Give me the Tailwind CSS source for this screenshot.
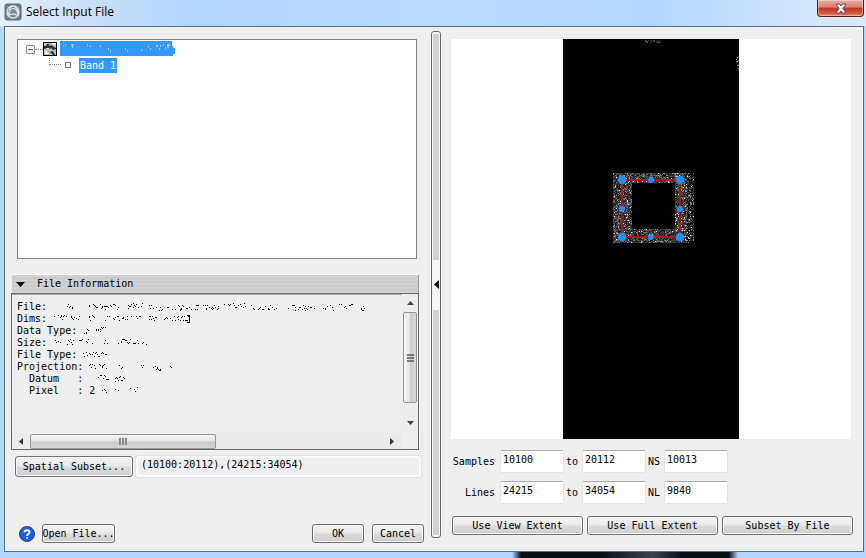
<!DOCTYPE html>
<html lang="en">
<head>
<meta charset="utf-8">
<title>Select Input File</title>
<script src="https://cdn.jsdelivr.net/npm/@tailwindcss/browser@4"></script>
</head>
<body class="relative flex h-screen flex-col overflow-hidden bg-[#b4d8fd] pr-0.5 pb-1.5 pl-1 font-['DejaVu_Sans_Mono','Liberation_Mono',monospace] text-[10px] leading-3 text-black">
  <div class="absolute inset-x-0 top-0 -z-10 h-[26px] bg-[linear-gradient(90deg,#e6f0fb_0%,#c9dff8_10%,#b3d6fb_22%,#b9dafc_50%,#b4d8fd_76%,#cde2fa_90%,#dceafb_100%)]"></div>
  <div class="absolute top-[552px] right-[128px] bottom-0 left-[512px] -z-10 bg-[linear-gradient(90deg,#b4d8fd00,#0a0f16_4%,#0a0f16_40%,#3c4450_62%,#0a0f16_75%,#0a0f16_96%,#b4d8fd00)]"></div>

  <header class="flex h-[26px] shrink-0 items-start justify-between">
    <div class="flex h-6 items-center gap-1">
      <svg class="size-[18px]" viewBox="0 0 18 18" aria-hidden="true">
        <rect x="1" y="1" width="16" height="16" rx="2" fill="#76828c" stroke="#59646d"/>
        <circle cx="9" cy="9" r="6" fill="#7f8a92" stroke="#dfe4e7" stroke-width="1.300"/>
        <path d="M4 12.500Q5 6 9 5.500T14 12.500M4 12Q9 10 14 12.500M8 3Q4 6 5.500 14M10 3q4 3 4.500 8" fill="none" stroke="#e1e6e8" stroke-width="1.100"/>
      </svg>
      <h1 class="font-['Open_Sans','Noto_Sans',sans-serif] text-[12px] leading-4">Select Input File</h1>
    </div>
    <button aria-label="Close" class="flex h-[17px] w-[47px] items-center justify-center rounded-b-[4px] border border-t-0 border-[#5a1d1b] bg-[linear-gradient(#e9aba0,#dc8073_45%,#bd3321_50%,#d5573c_80%,#e48a70)] shadow-[inset_0_0_0_1px_#ffffff60]">
      <svg class="h-[11px] w-[12px]" viewBox="0 0 12 11" aria-hidden="true"><path d="M1 1h3.500L6 3l1.500-2H11L8 5.500l3 4.500H7.500L6 8l-1.500 2H1l3-4.500z" fill="#f2f2f2" stroke="#56525c"/></svg>
    </button>
  </header>

  <main class="grid min-h-0 flex-1 grid-cols-[426fr_10px_422fr] border border-[#5c6b7c] bg-[#efefef]">
    <section class="flex min-h-0 min-w-0 flex-col pt-3 pb-2">
      <div class="mr-3.5 ml-3 flex min-h-0 flex-1 flex-col border border-[#7f848e] bg-white" role="tree">
        <div class="flex h-[18px] items-center pl-2" role="treeitem">
          <button aria-label="Collapse" class="flex size-[9px] items-center justify-center rounded-[1px] border border-[#919191] bg-[#f2f2f2]"><span class="h-px w-[5px] bg-[#3a5a9c]"></span></button>
          <span class="w-2 border-t border-dotted border-[#808080]"></span>
          <svg class="size-3.5" viewBox="0 0 14 14" aria-hidden="true"><rect width="14" height="14"/><rect x="1" y="1" width="12" height="12" fill="#b9beb9"/><path d="M1 4h2l1-2h2v2l2-1 3 2 2 1v1l-3 1-2-2-2 1-2-1-3 1zM5 9l2 1 3-1 2 4h-2l-2-2z" fill="#333"/><path d="M8 1l3 2 2-1v-1zM2 9h2l2 3H2zM4 6h2v1H4z" fill="#fff"/></svg>
          <svg class="ml-[3px] h-[18px] w-[116px]" viewBox="0 0 116 18" aria-hidden="true"><path d="M0 1h112v5h1v2h2v6h-2v2H0z" fill="#3399ff"/><path d="M3 6h1M5 5h1M11 5h3M12 7h1M27 5h1M30 6h1M40 6h1M48 9h1M50 11h1M65 9h1M67 11h1M81 10h1M88 7h1M90 9h1M96 6h2M99 9h1M100 6h1M103 5h1M105 8h1M107 5h3M107 7h2" stroke="#fff"/></svg>
        </div>
        <div class="flex h-4 items-start pl-[31px]" role="treeitem">
          <span class="h-[7px] w-3 border-b border-l border-dotted border-[#808080]"></span>
          <span class="mt-1 mr-2 ml-1 size-[6px] border border-[#777]"></span>
          <span class="h-[15px] bg-[#3399ff] px-px leading-[15px] text-white">Band 1</span>
        </div>
      </div>

      <button class="mt-[15px] mr-3 ml-[7px] flex h-[19px] items-center gap-3 border-t border-r border-t-white border-r-[#999] bg-[repeating-linear-gradient(#d2d2d2_0_2px,#cacaca_2px_4px)] pl-1 text-left">
        <svg class="h-[5px] w-[9px]" viewBox="0 0 9 5" aria-hidden="true"><path d="M0 0h9L4.500 5z"/></svg>File Information
      </button>
      <div class="mr-3 ml-1.5 flex h-[157px] shrink-0 flex-col border border-[#696969]">
        <div class="flex min-h-0 flex-1">
          <div class="flex min-w-0 flex-1 flex-col overflow-hidden border-t border-[#a8a4b0] pt-1.5 pl-[5px] whitespace-pre">
            <div class="flex">File: <svg class="h-3 w-[318px]" data-marks="14 6,33 4,40 28,74 16,96 24,122 24,150 16,170 24,198 26,234 28,270 12,286 14,306 8" aria-hidden="true"></svg></div>
            <div class="flex">Dims: <svg class="h-3 w-[145px]" data-marks="0 27,36 8,52 36,96 8,110 26" aria-hidden="true"><path d="M134 2h3v8h-3v-1h2V3h-2z"/></svg></div>
            <div class="flex">Data Type: <svg class="h-3 w-[40px]" data-marks="0 6,13 10" aria-hidden="true"></svg></div>
            <div class="flex">Size: <svg class="h-3 w-[110px]" data-marks="0 8,14 26,50 6,64 22,86 8" aria-hidden="true"></svg></div>
            <div class="flex">File Type: <svg class="h-3 w-[40px]" data-marks="0 24" aria-hidden="true"></svg></div>
            <div class="flex">Projection: <svg class="h-3 w-[110px]" data-marks="0 18,30 4,52 4,64 9,80 6" aria-hidden="true"></svg></div>
            <div class="flex">  Datum   : <svg class="h-3 w-[60px]" data-marks="0 4,8 12,23 14" aria-hidden="true"></svg></div>
            <div class="flex">  Pixel   : 2 <svg class="h-3 w-[60px]" data-marks="0 6,13 5,26 4,32 6" aria-hidden="true"></svg></div>
          </div>
          <div class="flex w-4 flex-col items-center bg-[#ededed]">
            <svg class="my-[7px] h-1 w-[7px] shrink-0" viewBox="0 0 7 4" aria-hidden="true"><path d="M0 4l3.500-4L7 4z" fill="#444"/></svg>
            <div class="flex h-[91px] w-3.5 flex-col items-center justify-center gap-px rounded-[2px] border border-[#969696] bg-[linear-gradient(90deg,#f6f6f6,#e6e6e8_45%,#cbcbd0_55%,#d9d9dd)]"><span class="h-0.5 w-[7px] bg-[#777]"></span><span class="h-0.5 w-[7px] bg-[#777]"></span><span class="h-0.5 w-[7px] bg-[#777]"></span></div>
            <svg class="mt-auto mb-2 h-1 w-[7px]" viewBox="0 0 7 4" aria-hidden="true"><path d="M0 0h7L3.500 4z" fill="#444"/></svg>
          </div>
        </div>
        <div class="mr-4 flex h-4 items-center bg-[#ebebeb]">
          <svg class="mx-[7px] h-[7px] w-1 shrink-0" viewBox="0 0 4 7" aria-hidden="true"><path d="M4 0v7L0 3.500z" fill="#333"/></svg>
          <div class="flex h-[15px] w-[186px] items-center justify-center gap-px rounded-[2px] border border-[#969696] bg-[linear-gradient(#f6f6f6,#e3e3e3_45%,#cbcbcb_55%,#d6d6d6)]"><span class="h-[7px] w-0.5 bg-[#888]"></span><span class="h-[7px] w-0.5 bg-[#888]"></span><span class="h-[7px] w-0.5 bg-[#888]"></span></div>
          <svg class="mr-2 ml-auto h-[7px] w-1" viewBox="0 0 4 7" aria-hidden="true"><path d="M0 0v7l4-3.500z" fill="#333"/></svg>
        </div>
      </div>

      <div class="mt-1.5 mr-2.5 ml-2.5 flex h-[21px] shrink-0 gap-[3px]">
        <button class="w-[118px] shrink-0 rounded-[3px] border border-[#707070] bg-[linear-gradient(#f4f4f4,#e9e9e9_48%,#dadada_52%,#cfcfcf)] shadow-[inset_0_0_0_1px_#fafafa]">Spatial Subset...</button>
        <input aria-label="Spatial subset" readonly value="(10100:20112),(24215:34054)" class="min-w-0 flex-1 rounded-[2px] border-2 border-[#fafafa] bg-[#efefef] px-[3px] pb-1 outline outline-[#e0e2e8]">
      </div>

      <div class="mt-[47px] mr-[7px] ml-3.5 flex h-[19px] shrink-0 items-center">
        <button aria-label="Help" class="size-4"><svg viewBox="0 0 16 16" aria-hidden="true"><circle cx="8" cy="8" r="7.500" fill="#1460f4" stroke="#333d55"/><path d="M5.500 6.300C5.500 3.500 10.500 3.500 10.500 6.300 10.500 8 8 8 8 10M8 11.200v1.600" fill="none" stroke="#fff" stroke-width="1.900"/></svg></button>
        <button class="ml-[7px] flex h-full w-[73px] items-center justify-center rounded-[3px] border border-[#707070] bg-[linear-gradient(#f4f4f4,#e9e9e9_48%,#dadada_52%,#cfcfcf)] whitespace-nowrap shadow-[inset_0_0_0_1px_#fafafa]">Open File...</button>
        <button class="ml-auto h-full w-[52px] rounded-[3px] border border-[#707070] bg-[linear-gradient(#f4f4f4,#e9e9e9_48%,#dadada_52%,#cfcfcf)] shadow-[inset_0_0_0_1px_#fafafa]">OK</button>
        <button class="ml-2 h-full w-[52px] rounded-[3px] border border-[#707070] bg-[linear-gradient(#f4f4f4,#e9e9e9_48%,#dadada_52%,#cfcfcf)] shadow-[inset_0_0_0_1px_#fafafa]">Cancel</button>
      </div>
    </section>

    <div class="mt-1 mb-[13px] flex flex-col rounded-[3px] border border-[#696969] bg-[#f8f8f8] px-px py-0.5" role="separator">
      <div class="flex-[226] bg-[#d2d2d2]"></div>
      <button aria-label="Collapse panel" class="flex h-[50px] items-center justify-end"><svg class="h-[9px] w-[5px]" viewBox="0 0 5 9" aria-hidden="true"><path d="M5 0v9L0 4.500z"/></svg></button>
      <div class="flex-[226] bg-[#d2d2d2]"></div>
    </div>

    <section class="flex min-h-0 min-w-0 flex-col pt-3 pb-4">
      <div class="mr-3 ml-2.5 flex min-h-0 flex-1 justify-center bg-white">
        <svg class="h-full w-[176px] bg-black" viewBox="0 0 176 400" role="img" aria-label="Band preview">
          <g id="speckle"></g>
          <path d="M59 141h58v57H59z" fill="none" stroke="#b01216" stroke-width="2"/>
          <path d="M88 134v7" stroke="#1e90ff"/>
          <g fill="#1e90ff">
            <circle cx="59" cy="141" r="4.200"/><circle cx="117" cy="141" r="4.200"/><circle cx="59" cy="198" r="4.200"/><circle cx="117" cy="198" r="4.200"/>
            <circle cx="88" cy="141" r="3"/><circle cx="59" cy="170" r="3"/><circle cx="117" cy="170" r="3"/><circle cx="88" cy="198" r="3"/>
          </g>
        </svg>
      </div>
      <form class="mt-[11px] ml-2.5 grid grid-cols-[44px_64px_18px_64px_18px_64px] gap-y-2 [&>label]:self-center">
        <label for="s1" class="text-right">Samples</label>
        <input id="s1" value="10100" class="ml-[5px] h-[23px] w-16 rounded-[2px] border border-[#e2e3ea] border-t-[#abadb3] bg-white px-0.5 pb-[5px]">
        <label for="s2" class="pl-[7px]">to</label>
        <input id="s2" value="20112" class="ml-[5px] h-[23px] w-16 rounded-[2px] border border-[#e2e3ea] border-t-[#abadb3] bg-white px-0.5 pb-[5px]">
        <label for="ns" class="pl-[7px]">NS</label>
        <input id="ns" value="10013" class="ml-[5px] h-[23px] w-16 rounded-[2px] border border-[#e2e3ea] border-t-[#abadb3] bg-white px-0.5 pb-[5px]">
        <label for="l1" class="text-right">Lines</label>
        <input id="l1" value="24215" class="ml-[5px] h-[23px] w-16 rounded-[2px] border border-[#e2e3ea] border-t-[#abadb3] bg-white px-0.5 pb-[5px]">
        <label for="l2" class="pl-[7px]">to</label>
        <input id="l2" value="34054" class="ml-[5px] h-[23px] w-16 rounded-[2px] border border-[#e2e3ea] border-t-[#abadb3] bg-white px-0.5 pb-[5px]">
        <label for="nl" class="pl-[7px]">NL</label>
        <input id="nl" value="9840" class="ml-[5px] h-[23px] w-16 rounded-[2px] border border-[#e2e3ea] border-t-[#abadb3] bg-white px-0.5 pb-[5px]">
      </form>
      <div class="mt-3 mr-2.5 ml-[11px] grid h-[19px] shrink-0 grid-cols-3 gap-1">
        <button class="rounded-[3px] border border-[#707070] bg-[linear-gradient(#f4f4f4,#e9e9e9_48%,#dadada_52%,#cfcfcf)] shadow-[inset_0_0_0_1px_#fafafa]">Use View Extent</button>
        <button class="rounded-[3px] border border-[#707070] bg-[linear-gradient(#f4f4f4,#e9e9e9_48%,#dadada_52%,#cfcfcf)] shadow-[inset_0_0_0_1px_#fafafa]">Use Full Extent</button>
        <button class="rounded-[3px] border border-[#707070] bg-[linear-gradient(#f4f4f4,#e9e9e9_48%,#dadada_52%,#cfcfcf)] shadow-[inset_0_0_0_1px_#fafafa]">Subset By File</button>
      </div>
    </section>
  </main>

<script>
  // Seeded generator keeps the speckle identical on every load.
  let seed = 7;
  const rnd = () => (seed = (seed * 16807) % 2147483647) / 2147483647;
  const NS = 'http://www.w3.org/2000/svg';
  const addPath = (parent, d, color) => {
    const p = document.createElementNS(NS, 'path');
    p.setAttribute('d', d);
    p.setAttribute('fill', color);
    parent.appendChild(p);
  };

  // Raster speckle around the selected square, grouped by grey level.
  const levels = ['#222222', '#363636', '#484848', '#606060', '#8c8c8c', '#e8e8e8'];
  const cells = levels.map(() => '');
  const fill = (x0, y0, x1, y1, density) => {
    for (let y = y0; y < y1; y++) for (let x = x0; x < x1; x++) {
      if (x >= 69 && x < 112 && y >= 144 && y < 190) continue;
      if (rnd() > density) continue;
      const r = rnd();
      const k = r > 0.96 ? 5 : Math.min(4, Math.floor(Math.pow(r, 1.4) * 5));
      cells[k] += `M${x} ${y}h1v1h-1z`;
    }
  };
  fill(50, 134, 124, 204, 0.92);
  fill(124, 134, 131, 204, 0.6);
  fill(82, 1, 98, 4, 0.5);
  fill(173, 17, 176, 32, 0.4);
  const speckle = document.getElementById('speckle');
  cells.forEach((d, i) => addPath(speckle, d, levels[i]));

  // Scrubbed values: only scattered pixels of each word remain.
  document.querySelectorAll('[data-marks]').forEach(svg => {
    let d = '';
    svg.dataset.marks.split(',').forEach(part => {
      const [x, w] = part.split(' ').map(Number);
      const top = 2 + Math.floor(rnd() * 3);
      for (let i = 0; i < w; i++) {
        if (rnd() < 0.5) d += `M${x + i} ${top + Math.floor(rnd() * 5)}h1v1h-1z`;
        if (rnd() < 0.2) d += `M${x + i} ${top + Math.floor(rnd() * 6)}h1v1h-1z`;
      }
    });
    addPath(svg, d, '#000');
  });
</script>
</body>
</html>
